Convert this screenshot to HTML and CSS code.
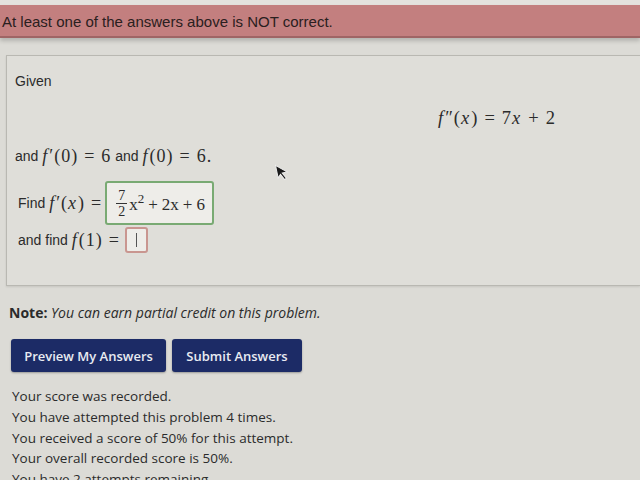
FILE: index.html
```html
<!DOCTYPE html>
<html>
<head>
<meta charset="utf-8">
<link rel="stylesheet" href="styles.css">
</head>
<body>
<div class="page">
  <div class="topstrip"></div>
  <div class="banner">At least one of the answers above is NOT correct.</div>
  <div class="problem">
    <div class="given">Given</div>
    <div class="display"><span class="math"><i>f</i>″(<i>x</i>)<span class="op">=</span>7<i>x</i><span class="op">+</span>2</span></div>
    <div class="line cond">and <span class="math"><i>f</i>′(0)<span class="op">=</span>6</span> and <span class="math"><i>f</i>(0)<span class="op">=</span>6.</span></div>
    <div class="line find">Find <span class="math"><i>f</i>′(<i>x</i>)<span class="op last">=</span></span><span class="ans good"><span class="frac"><span class="num">7</span><span class="den">2</span></span><span class="math up">x<sup>2</sup><span class="op">+</span>2x<span class="op">+</span>6</span></span>
    </div>
    <div class="line find2">and find <span class="math"><i>f</i>(1)<span class="op last">=</span></span><span class="ans bad"><span class="caret"></span></span>
    </div>
    <svg class="pointer" width="14" height="18" viewBox="0 0 14 18"><path d="M2 1 L2 14 L5 11 L8 17 L10 16 L7 10 L12 10 Z" fill="#1a1a1a" stroke="#eee" stroke-width="1" transform="rotate(-12 7 9)"/></svg>
  </div>
  <div class="note"><b>Note:</b> <i>You can earn partial credit on this problem.</i></div>
  <div class="buttons">
    <span class="btn preview">Preview My Answers</span>
    <span class="btn submit">Submit Answers</span>
  </div>
  <div class="status">
    <div>Your score was recorded.</div>
    <div>You have attempted this problem 4 times.</div>
    <div>You received a score of 50% for this attempt.</div>
    <div>Your overall recorded score is 50%.</div>
    <div>You have 2 attempts remaining.</div>
  </div>
</div>
</body>
</html>
```
FILE: styles.css
```css
html, body {
  margin: 0;
  padding: 0;
  overflow: hidden;
}
body {
  background: #dcdbd6;
  width: 640px;
  height: 480px;
  font-family: "Liberation Sans", Arial, sans-serif;
  color: #2b2b2b;
}
.page {
  display: flex;
  flex-direction: column;
}
.topstrip {
  height: 5px;
  background: #e4e2de;
}
.banner {
  height: 33px;
  box-sizing: border-box;
  padding: 8px 0 0 2px;
  background: #c37f7f;
  border-bottom: 2px solid #9f6565;
  box-shadow: 0 3px 4px rgba(0,0,0,0.18);
  font-size: 15px;
  color: #2a2020;
}
.problem {
  position: relative;
  margin: 17px 0 0 6px;
  height: 231px;
  border: 1px solid #b9b8b2;
  border-right: none;
  background: #dfded9;
  box-shadow: 0 1px 2px rgba(0,0,0,0.1);
  padding: 17px 0 0 8px;
  box-sizing: border-box;
  font-size: 14px;
}
.given {
  height: 20px;
}
.math {
  font-family: "Liberation Serif", "Times New Roman", serif;
  font-size: 18px;
  letter-spacing: 1px;
  white-space: nowrap;
}
.math i {
  font-style: italic;
  padding-right: 1px;
}
.math .op {
  margin: 0 6px;
}
.math .op.last {
  margin-right: 3px;
}
.display {
  margin: 15px 0 0 423px;
  height: 22px;
}
.display .math {
  font-size: 18.5px;
}
.line {
  display: flex;
  align-items: center;
  white-space: pre;
}
.cond {
  margin-top: 15px;
  height: 22px;
}
.find {
  margin-top: 14px;
  padding-left: 3px;
}
.find2 {
  margin-top: 2px;
  padding-left: 3px;
}
.ans {
  display: inline-flex;
  align-items: center;
  box-sizing: border-box;
  background: #eeede9;
  border-radius: 3px;
}
.good {
  height: 44px;
  width: 109px;
  border: 2px solid #79aa73;
  padding-left: 9px;
  gap: 2px;
}
.good .math {
  font-size: 17px;
  letter-spacing: 0;
}
.good .op {
  margin: 0 4px;
}
.bad {
  height: 26px;
  width: 23px;
  margin-left: 2px;
  border: 2px solid #c99690;
  justify-content: center;
}
.caret {
  width: 1px;
  height: 14px;
  background: #555;
}
.frac {
  display: inline-flex;
  flex-direction: column;
  align-items: center;
  font-family: "Liberation Serif", serif;
  font-size: 14px;
  line-height: 15px;
}
.num {
  border-bottom: 1px solid #333;
  padding: 0 2px;
}
.good sup {
  font-size: 13px;
}
.pointer {
  position: absolute;
  left: 268px;
  top: 107px;
}
.note {
  margin: 17px 0 0 9px;
  font-family: "Open Sans", sans-serif;
  font-size: 14px;
  color: #2b2b2b;
}
.note b { font-weight: 700; }
.buttons {
  display: flex;
  gap: 6px;
  margin: 17px 0 0 11px;
}
.btn {
  height: 33px;
  display: flex;
  align-items: center;
  justify-content: center;
  background: #1c2b66;
  color: #e9ebf2;
  border-radius: 3px;
  font-family: "Open Sans", sans-serif;
  font-size: 13px;
  font-weight: 600;
  box-shadow: 0 1px 2px rgba(0,0,0,0.3);
}
.preview { width: 155px; }
.submit { width: 130px; }
.status {
  margin: 14px 0 0 12px;
  font-family: "Open Sans", sans-serif;
  font-size: 13.5px;
  line-height: 20.8px;
  color: #2b2b2b;
}
```
